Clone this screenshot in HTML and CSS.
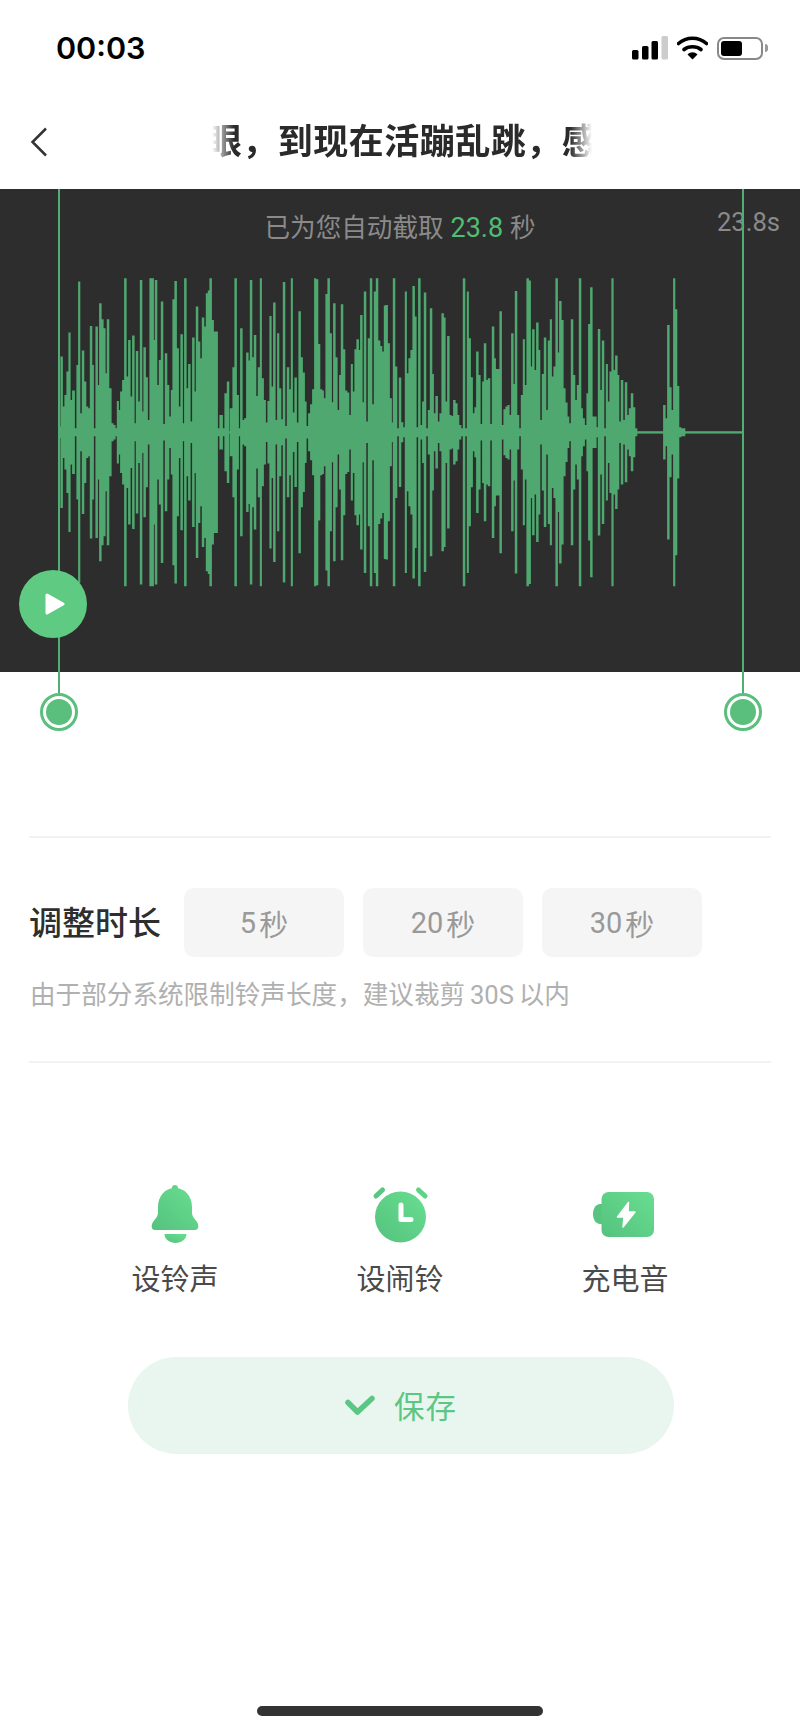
FILE: index.html
```html
<!DOCTYPE html>
<html lang="zh-CN">
<head>
    <meta charset="UTF-8">
    <meta name="viewport" content="width=device-width, initial-scale=1.0">
    <title>裁剪铃声</title>
    <link rel="stylesheet" href="styles.css">
</head>
<body>
    <div class="page">
        <div class="status-bar">
            <span class="time">00:03</span>
            <div class="status-icons">
                <svg class="signal" width="36" height="24" viewBox="0 0 36 24">
                    <rect x="0" y="14" width="6.5" height="9.5" rx="1.5" fill="#000"/>
                    <rect x="10" y="10" width="6.5" height="13.5" rx="1.5" fill="#000"/>
                    <rect x="19.5" y="5" width="6.5" height="18.5" rx="1.5" fill="#000"/>
                    <rect x="29.500" y="0" width="6.5" height="23.5" rx="1.5" fill="#ccc"/>
                </svg>
                <svg class="wifi" width="31" height="24" viewBox="0 0 31 24">
                    <path d="M1.500 7.500C9.500 0.500 21.500 0.500 29.500 7.500" fill="none" stroke="#000" stroke-width="3.600" stroke-linecap="round"/>
                    <path d="M7 13.500C11.500 9.800 19.500 9.800 24 13.500" fill="none" stroke="#000" stroke-width="3.600" stroke-linecap="round"/>
                    <path d="M10.500 18.500C13.500 15.600 17.500 15.600 20.500 18.500L15.500 23.500Z" fill="#000"/>
                </svg>
                <div class="battery">
                    <div class="battery-body"><div class="battery-level"></div></div>
                    <div class="battery-nub"></div>
                </div>
            </div>
        </div>

        <div class="nav">
            <svg class="back" width="18" height="30" viewBox="0 0 18 30">
                <path d="M16 1.500L2.500 15L16 28.500" fill="none" stroke="#333" stroke-width="2.500"/>
            </svg>
            <div class="nav-title"><span>眼，到现在活蹦乱跳，感</span></div>
        </div>

        <div class="wave-box">
            <p class="hint">已为您自动截取 <em>23.8</em> 秒</p>
            <span class="total">23.8s</span>
            <svg class="wave" width="800" height="325" viewBox="0 0 800 325">
                <rect x="60" y="161.200" width="682" height="2.400" fill="#4fa86f"/>
                <path id="wave-path" fill="#4fa86f"/>
            </svg>
            <div class="handle handle-left">
                <div class="handle-line"></div>
                <div class="handle-knob"><div class="handle-dot"></div></div>
            </div>
            <div class="handle handle-right">
                <div class="handle-line"></div>
                <div class="handle-knob"><div class="handle-dot"></div></div>
            </div>
            <div class="play">
                <svg width="20" height="22" viewBox="0 0 20 22">
                    <path d="M2 2L18 11L2 20Z" fill="#fff" stroke="#fff" stroke-width="3" stroke-linejoin="round"/>
                </svg>
            </div>
        </div>

        <div class="section">
            <div class="duration-row">
                <span class="duration-label">调整时长</span>
                <div class="duration-btn">5<i>秒</i></div>
                <div class="duration-btn">20<i>秒</i></div>
                <div class="duration-btn">30<i>秒</i></div>
            </div>
            <p class="note">由于部分系统限制铃声长度，建议裁剪 30S 以内</p>
        </div>

        <div class="actions">
            <div class="action">
                <div class="action-icon">
                    <svg width="48" height="58" viewBox="0 0 48 58">
                        <defs>
                            <linearGradient id="icon-green" x1="0" y1="1" x2="1" y2="0">
                                <stop offset="0" stop-color="#55c27e"/>
                                <stop offset="1" stop-color="#68de90"/>
                            </linearGradient>
                        </defs>
                        <circle cx="24" cy="3" r="3" fill="url(#icon-green)"/>
                        <path d="M24 3C14 3 7 11 7 22V28C7 31 5 33 2 37C0 40 0 45 4 45H44C48 45 48 40 46 37C43 33 41 31 41 28V22C41 11 34 3 24 3Z" fill="url(#icon-green)"/>
                        <path d="M13.500 49H35.500C35.500 54.500 30 58 24.500 58C19 58 13.500 54.500 13.500 49Z" fill="url(#icon-green)"/>
                    </svg>
                </div>
                <span>设铃声</span>
            </div>
            <div class="action">
                <div class="action-icon">
                    <svg width="57" height="57" viewBox="0 0 57 57">
                        <circle cx="28.500" cy="31" r="25.500" fill="url(#icon-green)"/>
                        <path d="M4 10L10.500 4" fill="none" stroke="#58c781" stroke-width="5" stroke-linecap="round"/>
                        <path d="M53 10L46.500 4" fill="none" stroke="#60d288" stroke-width="5" stroke-linecap="round"/>
                        <path d="M29 19V33.500H39" fill="none" stroke="#fff" stroke-width="5" stroke-linecap="round" stroke-linejoin="round"/>
                    </svg>
                </div>
                <span>设闹铃</span>
            </div>
            <div class="action">
                <div class="action-icon">
                    <svg class="icon-battery" width="61" height="45" viewBox="0 0 61 45">
                        <path d="M9 12H7C3.500 12 0 15.500 0 22C0 28.500 3.500 32 7 32H9Z" fill="#57c47f"/>
                        <rect x="8.500" y="0" width="52.500" height="45" rx="7" fill="url(#icon-green)"/>
                        <path d="M35.500 10.500L24.500 25H31L30 35L42 20H35Z" fill="#fff" stroke="#fff" stroke-width="1.500" stroke-linejoin="round"/>
                    </svg>
                </div>
                <span>充电音</span>
            </div>
        </div>

        <div class="save-btn">
            <svg width="30" height="21" viewBox="0 0 30 21">
                <path d="M3 7.500L12.500 17L27 3.500" fill="none" stroke="#5cc684" stroke-width="5.500" stroke-linecap="round" stroke-linejoin="round"/>
            </svg>
            <span class="save-text">保存</span>
        </div>

        <div class="home-bar"></div>
    </div>

    <script src="wave.js"></script>
</body>
</html>
```

FILE: styles.css
```css
* {
    margin: 0;
    padding: 0;
    box-sizing: border-box;
}

body {
    font-family: Roboto, "Noto Sans CJK SC", sans-serif;
    background: white;
}

.page {
    width: 800px;
    height: 1731px;
    overflow: hidden;
}

.status-bar {
    height: 96px;
    display: flex;
    align-items: center;
    justify-content: space-between;
    padding: 0 32px 0 56px;
}

.time {
    margin-bottom: 2px;
    font-family: Inter, sans-serif;
    font-size: 30.5px;
    font-weight: 600;
    color: #000;
}

.status-icons {
    display: flex;
    align-items: center;
    gap: 9px;
}

.battery {
    display: flex;
    align-items: center;
    gap: 2px;
}

.battery-body {
    width: 46px;
    height: 23px;
    border: 2px solid #888;
    border-radius: 7px;
    padding: 2px;
}

.battery-level {
    width: 21px;
    height: 15px;
    background: #000;
    border-radius: 3px;
}

.battery-nub {
    width: 3px;
    height: 8px;
    background: #999;
    border-radius: 0 3px 3px 0;
}

.nav {
    height: 93px;
    display: flex;
    align-items: center;
    padding-left: 30px;
}

.back {
    flex-shrink: 0;
    margin-bottom: 2px;
}

.nav-title {
    width: 380px;
    margin-left: 164px;
    padding-bottom: 8px;
    display: flex;
    justify-content: center;
    overflow: hidden;
    white-space: nowrap;
    font-size: 35px;
    letter-spacing: 0.5px;
    font-weight: 600;
    color: #2a2a2a;
    -webkit-mask-image: linear-gradient(90deg, transparent 0, #000 22px, #000 358px, transparent 100%);
    mask-image: linear-gradient(90deg, transparent 0, #000 22px, #000 358px, transparent 100%);
}

.nav-title span {
    flex-shrink: 0;
}

.wave-box {
    position: relative;
    height: 483px;
    background: #2d2d2d;
    padding-top: 21px;
}

.hint {
    height: 36px;
    line-height: 36px;
    text-align: center;
    font-size: 25.6px;
    word-spacing: 0.5px;
    color: #8a8a8a;
}

.hint em {
    font-style: normal;
    font-size: 27px;
    color: #4fbd74;
}

.total {
    position: absolute;
    top: 18px;
    right: 20px;
    line-height: 30px;
    font-size: 25.6px;
    color: #8a8a8a;
}

.wave {
    display: block;
    margin-top: 24px;
}

.handle {
    position: absolute;
    top: 0;
    width: 38px;
    display: flex;
    flex-direction: column;
    align-items: center;
}

.handle-left {
    left: 40px;
}

.handle-right {
    left: 724px;
}

.handle-line {
    width: 2px;
    height: 504px;
    background: #50ae75;
}

.handle-knob {
    width: 38px;
    height: 38px;
    border: 3px solid #5abf7c;
    border-radius: 50%;
    display: flex;
    align-items: center;
    justify-content: center;
}

.handle-dot {
    width: 26px;
    height: 26px;
    border-radius: 50%;
    background: #5abf7c;
}

.play {
    position: absolute;
    left: 19px;
    top: 381px;
    width: 68px;
    height: 68px;
    border-radius: 50%;
    background: #5fcb82;
    display: flex;
    align-items: center;
    justify-content: center;
    padding-left: 3px;
}

.section {
    margin: 164px 29px 0 29px;
    height: 227px;
    padding-top: 50px;
    border-top: 2px solid #f2f2f2;
    border-bottom: 2px solid #f2f2f2;
}

.duration-row {
    display: flex;
    align-items: center;
}

.duration-label {
    width: 155px;
    padding-bottom: 4px;
    font-size: 33px;
    font-weight: 500;
    color: #2e2e2e;
}

.duration-btn {
    width: 160px;
    height: 69px;
    margin-right: 19px;
    background: #f5f5f5;
    border-radius: 10px;
    display: flex;
    align-items: center;
    justify-content: center;
    font-size: 29px;
    color: #999;
}

.duration-btn i {
    font-style: normal;
    margin-left: 3px;
}

.note {
    margin-top: 20px;
    padding-left: 1px;
    line-height: 36px;
    font-size: 25.6px;
    word-spacing: -1.5px;
    color: #b0b0b0;
}

.actions {
    display: grid;
    grid-template-columns: repeat(3, 225px);
    justify-content: center;
    margin-top: 122px;
}

.action {
    display: flex;
    flex-direction: column;
    align-items: center;
    font-size: 29px;
    color: #4a4a4a;
}

.action-icon {
    height: 58px;
    display: flex;
    align-items: center;
    margin-bottom: 13px;
}

.icon-battery {
    margin-right: 3px;
}

.save-btn {
    width: 546px;
    height: 97px;
    margin: 59px 0 0 128px;
    background: #e9f6f0;
    border-radius: 49px;
    display: flex;
    align-items: center;
    justify-content: center;
    gap: 19px;
    font-size: 30.5px;
    letter-spacing: 1px;
    color: #5cc684;
}

.save-text {
    padding-bottom: 2px;
}

.home-bar {
    width: 286px;
    height: 10px;
    margin: 252px 0 0 257px;
    background: #333;
    border-radius: 5px;
}
```

FILE: wave.js
```js
// 波形数据: 每段 [起始x, [列x, 顶部y, ...]], 单位是放大3倍后的像素, 上下对称
var segments = [
    [55, [14,470, 17,260, 23,410, 29,375, 35,305, 41,188, 46,390, 52,362, 59,475, 65,285, 70,35, 75,430, 81,242, 87,335, 93,410, 99,415, 105,168, 111,285, 116,487, 122,170, 128,345, 133,100, 139,148, 145,175, 151,310, 156,148, 162,355, 169,460, 175,465, 181,490, 186,393, 191,420, 196,365, 202,330, 208,25, 214,320, 220,210, 226,380, 232,197, 238,460, 243,243, 249,395, 255,30, 261,425, 266,232, 272,322, 278,450, 284,25, 296,210, 300,30, 306,345, 312,270, 318,95, 324,462, 330,250, 336,345, 342,440, 348,360, 353,88, 359,33, 365,235, 371,410, 377,193, 383,460, 388,25, 394,355, 400,282, 406,455, 412,203, 418,365, 423,110, 429,215, 435,265, 441,143, 447,170, 453,70, 459,62, 464,25, 470,150, 476,185, 488,495, 494,435, 503,485, 509,370, 516,335]],
    [230, [0,415, 8,292, 14,25, 20,375, 26,487, 31,175, 37,450, 43,445, 49,248, 55,272, 60,30, 66,262, 72,195, 78,378, 84,292, 90,25, 95,325, 101,390, 107,458, 113,393, 119,138, 124,350, 130,98, 136,450, 142,190, 147,355, 153,448, 159,36, 165,468, 171,292, 177,358, 183,25, 188,428, 194,323, 200,458, 206,124, 212,262, 218,308, 224,395, 229,468, 235,430, 241,403, 247,358, 253,25, 258,28, 264,222, 270,358, 276,362, 281,385, 287,72, 293,25, 299,190, 305,397, 310,100, 316,262, 322,420, 328,315, 333,103, 339,238, 345,362, 351,368, 357,435, 363,282, 368,365, 374,238, 380,208, 386,240, 391,135, 397,397, 402,65, 408,455, 414,205, 420,25, 426,403, 432,65, 438,25, 444,212, 450,228, 456,245, 462,107, 467,105, 473,220, 479,385, 485,458, 489,25, 495,290, 501,487, 507,323, 513,457, 519,472]],
    [405, [0,65, 5,310, 11,265, 17,240, 23,48, 29,140, 34,472, 40,25, 46,465, 52,395, 57,68, 63,475, 69,420, 75,115, 81,312, 86,430, 92,378, 98,455, 104,430, 110,130, 116,143, 121,395, 127,198, 133,435, 139,438, 145,390, 151,400, 157,435, 162,465, 168,485, 174,25, 180,480, 186,65, 191,205, 197,322, 203,430, 209,412, 214,245, 220,315, 226,462, 232,335, 237,220, 243,330, 249,325, 255,462, 261,170, 267,265, 272,297, 284,124, 290,465, 296,418, 302,410, 308,405, 313,435, 319,190, 325,342, 330,63, 336,435, 342,475, 348,375, 354,208, 359,345, 365,25, 371,32, 377,290, 382,178, 388,300, 394,158, 400,240, 405,450, 411,312, 417,203, 423,420, 429,212, 435,148, 440,320, 446,290, 452,25, 458,248, 463,93, 469,150, 475,355, 481,398, 487,440, 492,460, 498,148, 504,315, 510,390, 516,345, 522,25]],
    [580, [2,415, 8,445, 14,465, 20,370, 25,162, 31,52, 37,440, 49,472, 54,177, 60,360, 66,212, 72,484, 78,282, 83,395, 89,305, 95,25, 100,300, 106,257, 112,315, 117,455, 123,330, 129,450, 135,337, 141,435, 147,415, 153,370, 159,412, 165,482]],
    [580, [250,405, 256,445, 262,165, 268,352, 274,420, 280,25, 285,118, 291,348, 297,472, 303,480, 309,484]]
];

function buildWave() {
    var d = '';
    var overlap = 0.25;
    segments.forEach(function (seg) {
        var ox = seg[0], cols = seg[1];
        for (var i = 0; i < cols.length; i += 2) {
            var next = i + 2 < cols.length ? cols[i + 2] : cols[i] + 6;
            var x1 = ox + cols[i] / 3 - overlap;
            var x2 = ox + next / 3 + overlap;
            var amp = Math.max((487 - cols[i + 1]) / 3, 4);
            d += 'M' + x1.toFixed(1) + ' ' + (162.3 - amp).toFixed(1);
            d += 'H' + x2.toFixed(1) + 'V' + (162.3 + amp).toFixed(1);
            d += 'H' + x1.toFixed(1) + 'Z';
        }
    });
    document.getElementById('wave-path').setAttribute('d', d);
}

buildWave();
```
